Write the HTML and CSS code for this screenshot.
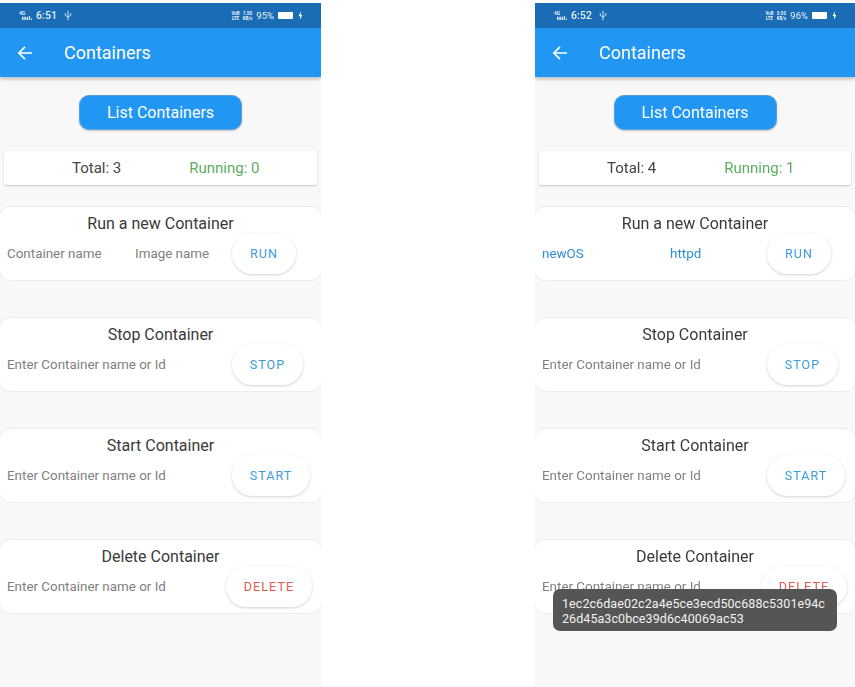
FILE: index.html
```html
<!DOCTYPE html>
<html lang="en">
<head>
<meta charset="utf-8">
<title>Containers</title>
<link rel="stylesheet" href="styles.css">
</head>
<body>
<main class="screens">
  <section class="phone phone-left">
    <div class="statusbar">
      <div class="status-side status-left">
        <span class="net"><span class="net-label">4G</span><svg class="net-bars" viewBox="0 0 13 5"><path d="M0 1h2v4H0zM3 1h2v4H3zM6 1h2v4H6zM9 0h1.500v5H9zM11.500 3H13v2h-1.500z" fill="#dbe9f6"/></svg></span>
        <span class="clock">6:51</span>
        <svg class="usb" viewBox="0 0 10 12"><path d="M5 0v12M1.500 3v2.500L5 8l3.500-2.500V3" fill="none" stroke="#e6f0fa" stroke-width="1.100"/></svg>
      </div>
      <div class="status-side status-right">
        <span class="tiny"><span>VoB</span><span>LTE</span></span>
        <span class="tiny"><span>1.50</span><span>KB/s</span></span>
        <span class="pct">95%</span>
        <span class="battery"></span>
        <svg class="bolt" viewBox="0 0 6 10"><path d="M3.500 0L.8 5.500h1.800L2.300 10 5.200 4.300H3.300z" fill="#fff"/></svg>
      </div>
    </div>
    <header class="appbar">
      <svg class="back" viewBox="0 0 16 16"><path d="M15 8H2M8 1.800L1.800 8 8 14.200" fill="none" stroke="#fff" stroke-width="1.700"/></svg>
      <h1>Containers</h1>
    </header>
    <div class="list-wrap"><button class="list-btn">List Containers</button></div>
    <div class="stats"><span class="total">Total: 3</span><span class="running">Running: 0</span></div>
    <div class="card card-first">
      <h2>Run a new Container</h2>
      <div class="row">
        <span class="ph ph-a">Container name</span><span class="ph ph-b">Image name</span>
        <button class="pill pill-run">RUN</button>
      </div>
    </div>
    <div class="card">
      <h2>Stop Container</h2>
      <div class="row"><span class="ph ph-long">Enter Container name or Id</span><button class="pill pill-stop">STOP</button></div>
    </div>
    <div class="card">
      <h2>Start Container</h2>
      <div class="row"><span class="ph ph-long">Enter Container name or Id</span><button class="pill pill-start">START</button></div>
    </div>
    <div class="card">
      <h2>Delete Container</h2>
      <div class="row"><span class="ph ph-long">Enter Container name or Id</span><button class="pill pill-delete">DELETE</button></div>
    </div>
  </section>

  <section class="phone phone-right">
    <div class="statusbar">
      <div class="status-side status-left">
        <span class="net"><span class="net-label">4G</span><svg class="net-bars" viewBox="0 0 13 5"><path d="M0 1h2v4H0zM3 1h2v4H3zM6 1h2v4H6zM9 0h1.500v5H9zM11.500 3H13v2h-1.500z" fill="#dbe9f6"/></svg></span>
        <span class="clock">6:52</span>
        <svg class="usb" viewBox="0 0 10 12"><path d="M5 0v12M1.500 3v2.500L5 8l3.500-2.500V3" fill="none" stroke="#e6f0fa" stroke-width="1.100"/></svg>
      </div>
      <div class="status-side status-right">
        <span class="tiny"><span>VoB</span><span>LTE</span></span>
        <span class="tiny"><span>0.50</span><span>KB/s</span></span>
        <span class="pct">96%</span>
        <span class="battery"></span>
        <svg class="bolt" viewBox="0 0 6 10"><path d="M3.500 0L.8 5.500h1.800L2.300 10 5.200 4.300H3.300z" fill="#fff"/></svg>
      </div>
    </div>
    <header class="appbar">
      <svg class="back" viewBox="0 0 16 16"><path d="M15 8H2M8 1.800L1.800 8 8 14.200" fill="none" stroke="#fff" stroke-width="1.700"/></svg>
      <h1>Containers</h1>
    </header>
    <div class="list-wrap"><button class="list-btn">List Containers</button></div>
    <div class="stats"><span class="total">Total: 4</span><span class="running">Running: 1</span></div>
    <div class="card card-first">
      <h2>Run a new Container</h2>
      <div class="row">
        <span class="val val-a">newOS</span><span class="val val-b">httpd</span>
        <button class="pill pill-run">RUN</button>
      </div>
    </div>
    <div class="card">
      <h2>Stop Container</h2>
      <div class="row"><span class="ph ph-long">Enter Container name or Id</span><button class="pill pill-stop">STOP</button></div>
    </div>
    <div class="card">
      <h2>Start Container</h2>
      <div class="row"><span class="ph ph-long">Enter Container name or Id</span><button class="pill pill-start">START</button></div>
    </div>
    <div class="card">
      <h2>Delete Container</h2>
      <div class="row"><span class="ph ph-long">Enter Container name or Id</span><button class="pill pill-delete">DELETE</button></div>
    </div>
    <div class="toast">1ec2c6dae02c2a4e5ce3ecd50c688c5301e94c<br>26d45a3c0bce39d6c40069ac53</div>
  </section>
</main>
</body>
</html>
```

FILE: styles.css
```css
* { box-sizing: border-box; }
html, body { margin: 0; padding: 0; background: #fff; }
body { font-family: Roboto, "Liberation Sans", sans-serif; height: 687px; overflow: hidden; }
.screens { display: flex; justify-content: space-between; padding-top: 3px; height: 687px; filter: blur(.3px); }
.phone { position: relative; background: #f8f8f8; height: 684px; overflow: hidden; }
.phone-left { width: 321px; }
.phone-right { width: 320px; }

.statusbar { height: 25px; background: #1a6db5; display: flex; align-items: center; justify-content: space-between; padding: 0 18px 0 19px; color: #e6f0fa; }
.status-side { display: flex; align-items: center; }
.net { display: flex; flex-direction: column; width: 14px; margin-right: 3px; }
.net-label { font-size: 5px; line-height: 5px; font-weight: 700; }
.net-bars { width: 10px; height: 4px; margin-left: 3px; }
.clock { font-size: 10.500px; font-weight: 500; letter-spacing: .1px; margin-right: 7px; }
.usb { width: 8px; height: 11px; }
.tiny { display: flex; flex-direction: column; font-size: 4.500px; line-height: 5px; font-weight: 700; margin-right: 3px; text-align: center; }
.pct { font-size: 9.500px; margin-left: 1px; margin-right: 4px; }
.battery { width: 15px; height: 7px; background: #fff; border-radius: 1px; margin-right: 5px; }
.bolt { width: 5px; height: 9px; }

.appbar { height: 49px; background: #2196f3; display: flex; align-items: center; padding-left: 17px; box-shadow: 0 2px 4px rgba(0,0,0,.25); position: relative; }
.back { width: 16px; height: 16px; }
.appbar h1 { margin: 0 0 0 31px; font-size: 18px; font-weight: 400; color: #fff; }

.list-wrap { display: flex; justify-content: center; padding-top: 18px; }
.list-btn { width: 163px; height: 35px; border: 1px solid #5a9fd8; border-radius: 10px; background: #2196f3; color: #fff; font: 400 16px Roboto, sans-serif; box-shadow: 0 1px 2px rgba(0,0,0,.2); padding: 0; }

.stats { margin: 21px 4px 0; height: 34px; background: #fff; border-radius: 3px; box-shadow: 0 1px 2px rgba(0,0,0,.2); display: flex; align-items: center; font-size: 15px; }
.total { margin-left: 68px; color: #444; }
.running { margin-left: 68px; color: #5cad5f; }

.card { margin: 36px -1px 0; height: 75px; background: #fff; border: 1px solid #ededed; border-radius: 11px; }
.card-first { margin-top: 21px; }
.card h2 { margin: 8px 0 0; text-align: center; font-size: 16px; line-height: 18px; font-weight: 400; color: #3a3a3a; }
.row { display: flex; align-items: center; height: 40px; position: relative; padding-left: 7px; }
.ph { font-size: 13.400px; color: #808080; white-space: nowrap; }
.ph-a { width: 128px; }
.ph-b { width: 97px; }
.ph-long { width: 225px; }
.val { font-size: 13.400px; color: #2b8fd6; }
.val-a { width: 128px; }
.val-b { width: 97px; }
.pill { height: 41px; margin-top: 1px; border: 0; border-radius: 21px; background: #fff; box-shadow: 0 1px 3px rgba(0,0,0,.18); font: 400 12.500px Roboto, sans-serif; letter-spacing: 1.100px; color: #3d9cdb; padding: 0; }
.pill-run { width: 64px; }
.pill-stop { width: 71px; }
.pill-start { width: 78px; }
.pill-delete { width: 86px; margin-left: -6px; color: #de5a52; }

.toast { position: absolute; left: 18px; top: 586px; width: 284px; height: 42px; background: #555; border-radius: 7px; color: #f2f2f2; font-size: 12.500px; line-height: 15px; padding: 7px 9px; letter-spacing: .07px; white-space: nowrap; }
```
